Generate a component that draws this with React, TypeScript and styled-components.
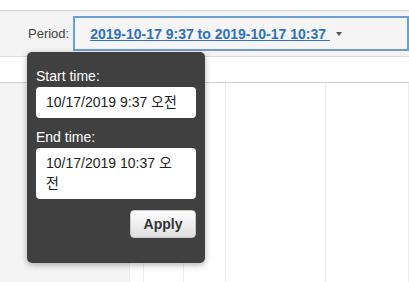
import React from "react";
import styled, { createGlobalStyle } from "styled-components";

const Global = createGlobalStyle`
  html, body { margin: 0; padding: 0; background: #ffffff; }
  body { font-family: "Liberation Sans", Arial, sans-serif; width: 409px; height: 282px; overflow: hidden; }
`;

const Page = styled.div`
  position: relative;
  width: 409px;
  height: 282px;
  padding-top: 10px;
  box-sizing: border-box;
  background: #fff;
`;

const Header = styled.div`
  display: flex;
  align-items: center;
  height: 47px;
  box-sizing: border-box;
  border-top: 1px solid #d2d2d2;
  border-bottom: 1px solid #dcdcdc;
  background: #f3f3f3;
  padding-left: 28px;
`;

const Label = styled.span`
  font-size: 13px;
  color: #444;
  margin-right: 4px;
`;

const PeriodButton = styled.div`
  display: flex;
  align-items: center;
  width: 336px;
  height: 35px;
  box-sizing: border-box;
  border: 2px solid #6b9fd4;
  background: #f5f5f5;
  padding-left: 15px;
`;

const PeriodLink = styled.a`
  font-size: 14px;
  font-weight: bold;
  color: #2f70c2;
  text-decoration: underline;
  white-space: pre;
`;

const Caret = styled.span`
  margin-left: 6px;
  width: 0;
  height: 0;
  border-left: 3.5px solid transparent;
  border-right: 3.5px solid transparent;
  border-top: 4px solid #555;
`;

const SubBar = styled.div`
  height: 26px;
  box-sizing: border-box;
  border-bottom: 1px solid #cfcfcf;
  background: #fff;
`;

const Body = styled.div`
  display: flex;
  height: 199px;
`;

const Col = styled.div<{ $w?: number; $bg?: string }>`
  ${(p) => (p.$w ? `width: ${p.$w}px; flex: none;` : "flex: 1;")}
  background: ${(p) => p.$bg || "#fff"};
  border-right: 1px solid #ececec;
  box-sizing: border-box;
`;

const Popover = styled.div`
  position: absolute;
  left: 27px;
  top: 52px;
  width: 178px;
  height: 211px;
  box-sizing: border-box;
  background: #404040;
  border-radius: 5px;
  box-shadow: 0 2px 6px rgba(0, 0, 0, 0.3);
  padding: 16px 9px 0 9px;
  display: flex;
  flex-direction: column;
`;

const FieldLabel = styled.div<{ $mt?: number }>`
  color: #fff;
  font-size: 14px;
  line-height: 17px;
  margin-top: ${(p) => p.$mt || 0}px;
  margin-bottom: 2px;
`;

const Field = styled.div`
  background: #fff;
  border-radius: 4px;
  font-size: 14px;
  line-height: 20px;
  color: #222;
  padding: 5px 12px 6px 10px;
  font-family: "Liberation Sans", Arial, "Noto Sans CJK KR", sans-serif;
`;

const Footer = styled.div`
  display: flex;
  justify-content: flex-end;
  margin-top: 11px;
`;

const ApplyButton = styled.button`
  width: 66px;
  height: 28px;
  border: 1px solid #c8c8c8;
  border-radius: 4px;
  background: linear-gradient(#ffffff, #dedede);
  font-family: "Liberation Sans", Arial, sans-serif;
  font-size: 14px;
  font-weight: bold;
  color: #333;
  padding: 0;
`;

export default function App() {
  return (
    <>
      <Global />
      <Page>
        <Header>
          <Label>Period:</Label>
          <PeriodButton>
            <PeriodLink>2019-10-17 9:37 to 2019-10-17 10:37 </PeriodLink>
            <Caret />
          </PeriodButton>
        </Header>
        <SubBar />
        <Body>
          <Col $w={130} $bg="#f4f4f4" />
          <Col $w={14} />
          <Col $w={40} />
          <Col $w={42} />
          <Col $w={100} />
          <Col />
        </Body>
        <Popover>
          <FieldLabel>Start time:</FieldLabel>
          <Field>10/17/2019 9:37 오전</Field>
          <FieldLabel $mt={11}>End time:</FieldLabel>
          <Field>10/17/2019 10:37 오전</Field>
          <Footer>
            <ApplyButton>Apply</ApplyButton>
          </Footer>
        </Popover>
      </Page>
    </>
  );
}
